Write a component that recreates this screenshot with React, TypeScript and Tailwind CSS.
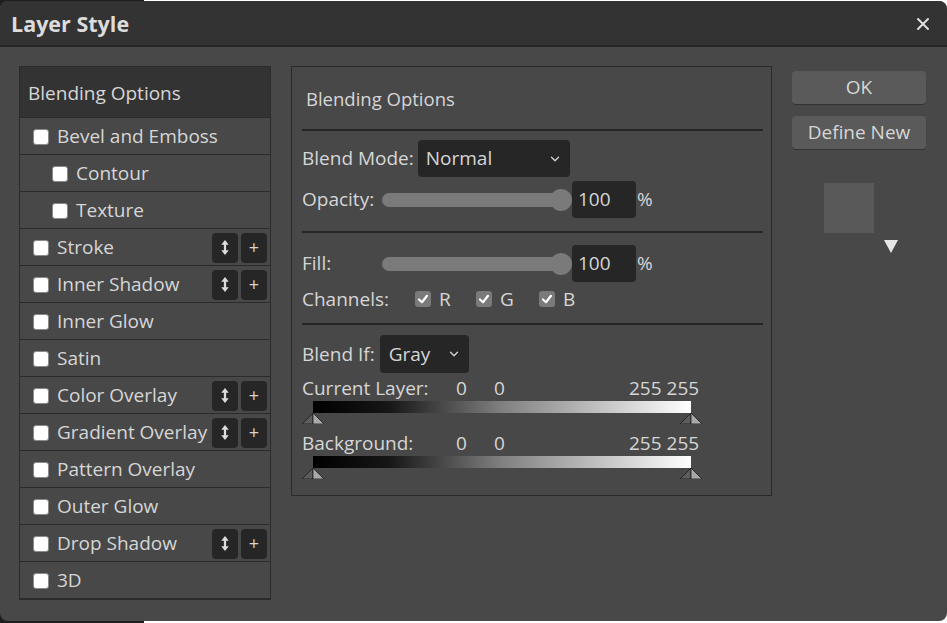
import { ChevronDown, X } from 'lucide-react'

const rows: { label: string; indent?: boolean; tools?: boolean }[] = [
  { label: 'Bevel and Emboss' },
  { label: 'Contour', indent: true },
  { label: 'Texture', indent: true },
  { label: 'Stroke', tools: true },
  { label: 'Inner Shadow', tools: true },
  { label: 'Inner Glow' },
  { label: 'Satin' },
  { label: 'Color Overlay', tools: true },
  { label: 'Gradient Overlay', tools: true },
  { label: 'Pattern Overlay' },
  { label: 'Outer Glow' },
  { label: 'Drop Shadow', tools: true },
  { label: '3D' },
]

function Box() {
  return <span className="block h-4 w-4 shrink-0 rounded-[3px] border border-[#8a8a8a] bg-white" />
}

function Check() {
  return (
    <span className="flex h-4 w-4 shrink-0 items-center justify-center rounded-[3px] bg-[#7a7a7a]">
      <svg viewBox="0 0 12 12" className="h-3 w-3">
        <path d="M2 6.5 L5 9.2 L10 2.8" fill="none" stroke="#fff" strokeWidth="2.2" strokeLinecap="round" strokeLinejoin="round" />
      </svg>
    </span>
  )
}

function Marker() {
  return (
    <svg viewBox="0 0 22 11" className="h-[11px] w-[22px]">
      <path d="M11 0 L0 11 L11 11 Z" fill="#5c5c5c" stroke="#1c1c1c" strokeWidth="0.8" />
      <path d="M11 0 L22 11 L11 11 Z" fill="#a8a8a8" stroke="#1c1c1c" strokeWidth="0.8" />
    </svg>
  )
}

function Slider() {
  return (
    <div className="relative flex h-[22px] w-[190px] items-center">
      <div className="h-[14px] w-full rounded-full bg-[#7a7a7a]" />
      <div className="absolute right-0 h-[22px] w-[22px] rounded-full bg-[#7a7a7a]" />
    </div>
  )
}

function NumBox({ v }: { v: string }) {
  return (
    <div className="flex h-[37px] w-[64px] items-center rounded-[4px] bg-[#262626] pl-[6px]">{v}</div>
  )
}

function Range({ label }: { label: string }) {
  return (
    <div>
      <div className="flex h-[24px] items-center">
        <span className="w-[154px]">{label}</span>
        <span className="w-[38px]">0</span>
        <span className="w-[135px]">0</span>
        <span>255 255</span>
      </div>
      <div className="ml-[11px] mt-[1px] h-[12px] w-[378px] bg-[linear-gradient(to_right,#000,#161616_20%,#808080_50%,#fff_100%)]" />
      <div className="flex w-[400px] justify-between">
        <Marker />
        <Marker />
      </div>
    </div>
  )
}

export default function App() {
  return (
    <div
      className="h-[623px] w-[947px] overflow-hidden bg-[linear-gradient(to_right,#1e1e1e_144px,#ffffff_144px)] pt-[1px] text-[#d6d6d6]"
      style={{ fontFamily: '"Open Sans", "Noto Sans", sans-serif' }}
    >
      <div className="h-[620px] overflow-hidden rounded-[8px] bg-[#484848]">
        {/* Title bar */}
        <div className="flex h-[46px] items-center justify-between border-b-2 border-[#262626] bg-[#333333] pl-[11px] pr-[14px] pt-[2px]">
          <span className="text-[21.5px] font-bold text-[#dcdcdc]">Layer Style</span>
          <X size={20} strokeWidth={2.4} className="text-[#e0e0e0]" />
        </div>

        <div className="flex pl-[19px] pt-[19px] text-[19px]">
          {/* Style list */}
          <div className="w-[252px] border border-[#2b2b2b]">
            <div className="flex h-[51px] items-center border-b border-[#2b2b2b] bg-[#333333] pl-[8px] pt-[2px]">
              Blending Options
            </div>
            {rows.map((r) => (
              <div
                key={r.label}
                className={`flex h-[37px] items-center gap-[8px] border-b border-[#2b2b2b] pr-[3px] pt-[1px] ${r.indent ? 'pl-[32px]' : 'pl-[13px]'}`}
              >
                <Box />
                <span className="min-w-0 flex-1 whitespace-nowrap">{r.label}</span>
                {r.tools && (
                  <div className="flex shrink-0 gap-[3px]">
                    <span className="flex h-[30px] w-[26px] items-center justify-center rounded-[4px] bg-[#262626]">
                      <svg viewBox="0 0 8 16" className="h-[15px] w-[8px]">
                        <path d="M4 0 L8 5 L5.2 5 L5.2 11 L8 11 L4 16 L0 11 L2.8 11 L2.8 5 L0 5 Z" fill="#dcdcdc" />
                      </svg>
                    </span>
                    <span className="flex h-[30px] w-[26px] items-center justify-center rounded-[4px] bg-[#262626] text-[18px]">
                      +
                    </span>
                  </div>
                )}
              </div>
            ))}
          </div>

          {/* Options panel */}
          <div className="ml-[20px] h-[430px] w-[481px] border border-[#2b2b2b] pl-[10px] pr-[8px]">
            <div className="flex h-[62px] items-center pl-[4px] pt-[2px] text-[18.5px]">Blending Options</div>
            <div className="h-[2px] bg-[#262626]" />

            <div className="mt-[9px] flex h-[37px] items-center gap-[4px]">
              <span>Blend Mode:</span>
              <div className="flex h-[37px] w-[152px] items-center justify-between rounded-[4px] bg-[#262626] pl-[8px] pr-[8px]">
                Normal
                <ChevronDown size={14} strokeWidth={2.2} />
              </div>
            </div>
            <div className="mt-[4px] flex h-[37px] items-center">
              <span className="w-[80px]">Opacity:</span>
              <Slider />
              <NumBox v="100" />
              <span className="ml-[1px]">%</span>
            </div>

            <div className="mt-[13px] h-[2px] bg-[#262626]" />

            <div className="mt-[12px] flex h-[37px] items-center">
              <span className="w-[80px]">Fill:</span>
              <Slider />
              <NumBox v="100" />
              <span className="ml-[1px]">%</span>
            </div>
            <div className="flex h-[34px] items-center">
              <span className="w-[113px]">Channels:</span>
              <Check />
              <span className="ml-[8px] w-[37px]">R</span>
              <Check />
              <span className="ml-[8px] w-[39px]">G</span>
              <Check />
              <span className="ml-[8px]">B</span>
            </div>

            <div className="mt-[7px] h-[2px] bg-[#262626]" />

            <div className="mt-[10px] flex h-[38px] items-center gap-[5px]">
              <span>Blend If:</span>
              <div className="flex h-[38px] w-[89px] items-center justify-between rounded-[4px] bg-[#262626] pl-[9px] pr-[8px]">
                Gray
                <ChevronDown size={14} strokeWidth={2.2} />
              </div>
            </div>
            <div className="mt-[3px]">
              <Range label="Current Layer:" />
            </div>
            <div className="mt-[7px]">
              <Range label="Background:" />
            </div>
          </div>

          {/* Buttons */}
          <div className="ml-[20px] flex w-[134px] flex-col pt-[5px]">
            <div className="flex h-[34px] items-center justify-center rounded-[4px] border-b border-[#333] bg-[#5a5a5a]">OK</div>
            <div className="mt-[11px] flex h-[34px] items-center justify-center rounded-[4px] border-b border-[#333] bg-[#5a5a5a]">
              Define New
            </div>
            <div className="ml-[32px] mt-[33px] h-[50px] w-[50px] bg-[#595959]" />
            <svg viewBox="0 0 14 13" className="ml-[92px] mt-[7px] h-[13px] w-[14px]">
              <path d="M0 0 L14 0 L7 13 Z" fill="#e6e6e6" />
            </svg>
          </div>
        </div>
      </div>
    </div>
  )
}
